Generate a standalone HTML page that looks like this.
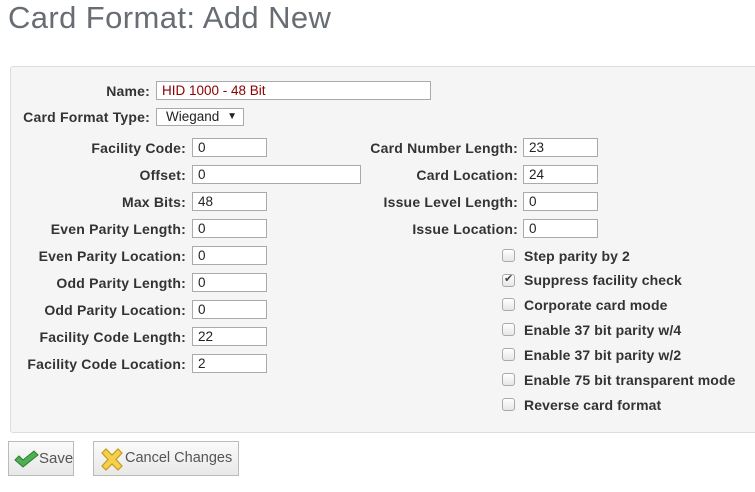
<!DOCTYPE html>
<html><head><style>
body{margin:0;width:755px;height:492px;background:#fff;font-family:"Liberation Sans",Arial,sans-serif;position:relative;overflow:hidden}
h1{position:absolute;left:8px;top:0px;margin:0;font-weight:normal;font-size:31px;letter-spacing:0.4px;color:#676d73;white-space:nowrap}
.panel{position:absolute;left:10px;top:66px;width:760px;height:365px;background:#f5f5f5;border:1px solid #ddd;border-radius:3px}
.l{position:absolute;font-size:14px;letter-spacing:0.2px;font-weight:bold;color:#333;text-align:right;white-space:nowrap;line-height:16px}
.i{position:absolute;height:19px;box-sizing:border-box;border:1px solid #aaa;background:#fff;font-size:13.5px;line-height:17px;padding-left:5px;color:#222}
.cb{position:absolute;left:502px;width:11px;height:11px;border:1px solid #aaa;border-radius:3px;background:linear-gradient(#fff,#e6e6e6)}
.ct{position:absolute;left:524px;font-size:14px;letter-spacing:0.1px;font-weight:bold;color:#333;line-height:16px;white-space:nowrap}
.btn{position:absolute;top:441px;height:35px;box-sizing:border-box;border:1px solid #bbb;background:linear-gradient(#fafafa,#e8e8e8);font-size:15px;color:#555;line-height:33px}
</style></head><body>
<h1>Card Format: Add New</h1>
<div class="panel"></div>

<div class="l" style="right:605px;top:83px">Name:</div>
<div class="i" style="left:156px;top:81px;width:275px;color:#8b0000">HID 1000 - 48 Bit</div>
<div class="l" style="right:605px;top:109px">Card Format Type:</div>
<div class="i" style="left:156px;top:108px;width:88px;height:18px;line-height:16px;color:#222;padding-left:9px">Wiegand<span style="position:absolute;right:6px;font-size:10px">▼</span></div>

<div class="l" style="right:569px;top:140px">Facility Code:</div>
<div class="i" style="left:192px;top:138px;width:75px">0</div>
<div class="l" style="right:569px;top:167px">Offset:</div>
<div class="i" style="left:192px;top:165px;width:169px">0</div>
<div class="l" style="right:569px;top:194px">Max Bits:</div>
<div class="i" style="left:192px;top:192px;width:75px">48</div>
<div class="l" style="right:569px;top:221px">Even Parity Length:</div>
<div class="i" style="left:192px;top:219px;width:75px">0</div>
<div class="l" style="right:569px;top:248px">Even Parity Location:</div>
<div class="i" style="left:192px;top:246px;width:75px">0</div>
<div class="l" style="right:569px;top:275px">Odd Parity Length:</div>
<div class="i" style="left:192px;top:273px;width:75px">0</div>
<div class="l" style="right:569px;top:302px">Odd Parity Location:</div>
<div class="i" style="left:192px;top:300px;width:75px">0</div>
<div class="l" style="right:569px;top:329px">Facility Code Length:</div>
<div class="i" style="left:192px;top:327px;width:75px">22</div>
<div class="l" style="right:569px;top:356px">Facility Code Location:</div>
<div class="i" style="left:192px;top:354px;width:75px">2</div>

<div class="l" style="right:237px;top:140px">Card Number Length:</div>
<div class="i" style="left:523px;top:138px;width:75px">23</div>
<div class="l" style="right:237px;top:167px">Card Location:</div>
<div class="i" style="left:523px;top:165px;width:75px">24</div>
<div class="l" style="right:237px;top:194px">Issue Level Length:</div>
<div class="i" style="left:523px;top:192px;width:75px">0</div>
<div class="l" style="right:237px;top:221px">Issue Location:</div>
<div class="i" style="left:523px;top:219px;width:75px">0</div>

<div class="cb" style="top:249px"></div><div class="ct" style="top:248px">Step parity by 2</div>
<div class="cb" style="top:274px"><span style="position:absolute;left:1px;top:-3px;font-size:11px;color:#444">✔</span></div><div class="ct" style="top:272px">Suppress facility check</div>
<div class="cb" style="top:298px"></div><div class="ct" style="top:297px">Corporate card mode</div>
<div class="cb" style="top:323px"></div><div class="ct" style="top:322px">Enable 37 bit parity w/4</div>
<div class="cb" style="top:348px"></div><div class="ct" style="top:347px">Enable 37 bit parity w/2</div>
<div class="cb" style="top:373px"></div><div class="ct" style="top:372px">Enable 75 bit transparent mode</div>
<div class="cb" style="top:398px"></div><div class="ct" style="top:397px">Reverse card format</div>

<div class="btn" style="left:8px;width:66px">
<svg style="position:absolute;left:4px;top:8px" width="26" height="18" viewBox="0 0 26 18"><path d="M2 10 L6 6 L10 10 L21 1 L25 5 L10 17 Z" fill="#4caf50" stroke="#2e7d32" stroke-width="1"/></svg>
<span style="position:absolute;left:30px">Save</span></div>
<div class="btn" style="left:93px;width:146px">
<svg style="position:absolute;left:5px;top:5px" width="26" height="25" viewBox="0 0 26 25"><path d="M3 6 L7 2 L13 8 L19 2 L23 6 L17 12.5 L23 19 L19 23 L13 17 L7 23 L3 19 L9 12.5 Z" fill="#f5d04a" stroke="#c79a1a" stroke-width="1.2"/></svg>
<span style="position:absolute;left:31px;font-size:14.5px">Cancel Changes</span></div>
</body></html>
